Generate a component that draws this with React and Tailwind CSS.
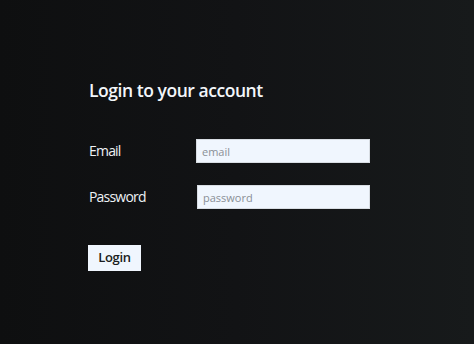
import React from 'react'

export default function App() {
  return (
    <div
      className="h-[344px] w-[474px] bg-gradient-to-r from-[#0e0f10] via-[#121315] to-[#171a1b] pl-[89px] pt-[78px] text-white"
      style={{ fontFamily: '"Open Sans", sans-serif' }}
    >
      <h1 className="text-[17.5px] font-semibold leading-[24px] tracking-[-0.45px] text-[#f3f6fa]">
        Login to your account
      </h1>

      <form className="mt-[37px] flex flex-col">
        <div className="flex items-center">
          <label className="w-[107px] text-[14px] leading-[20px] tracking-[-0.8px] text-[#eef2f6]">Email</label>
          <input
            type="email"
            placeholder="email"
            className="h-[24px] w-[174px] border border-[#d8dde3] bg-[#f0f6fe] px-[5px] text-[11px] text-gray-800 outline-none placeholder:text-[#8a8f96]"
          />
        </div>

        <div className="mt-[22px] flex items-center">
          <label className="w-[108px] text-[14px] leading-[20px] tracking-[-0.8px] text-[#eef2f6]">Password</label>
          <input
            type="password"
            placeholder="password"
            className="h-[24px] w-[173px] border border-[#d8dde3] bg-[#f0f6fe] px-[5px] text-[11px] text-gray-800 outline-none placeholder:text-[#8a8f96]"
          />
        </div>

        <div className="mt-[35px] -ml-px">
          <button
            type="button"
            className="h-[26px] w-[53px] bg-[#f0f6fe] text-[13px] font-semibold tracking-[-0.3px] text-[#1b1d20]"
          >
            Login
          </button>
        </div>
      </form>
    </div>
  )
}
